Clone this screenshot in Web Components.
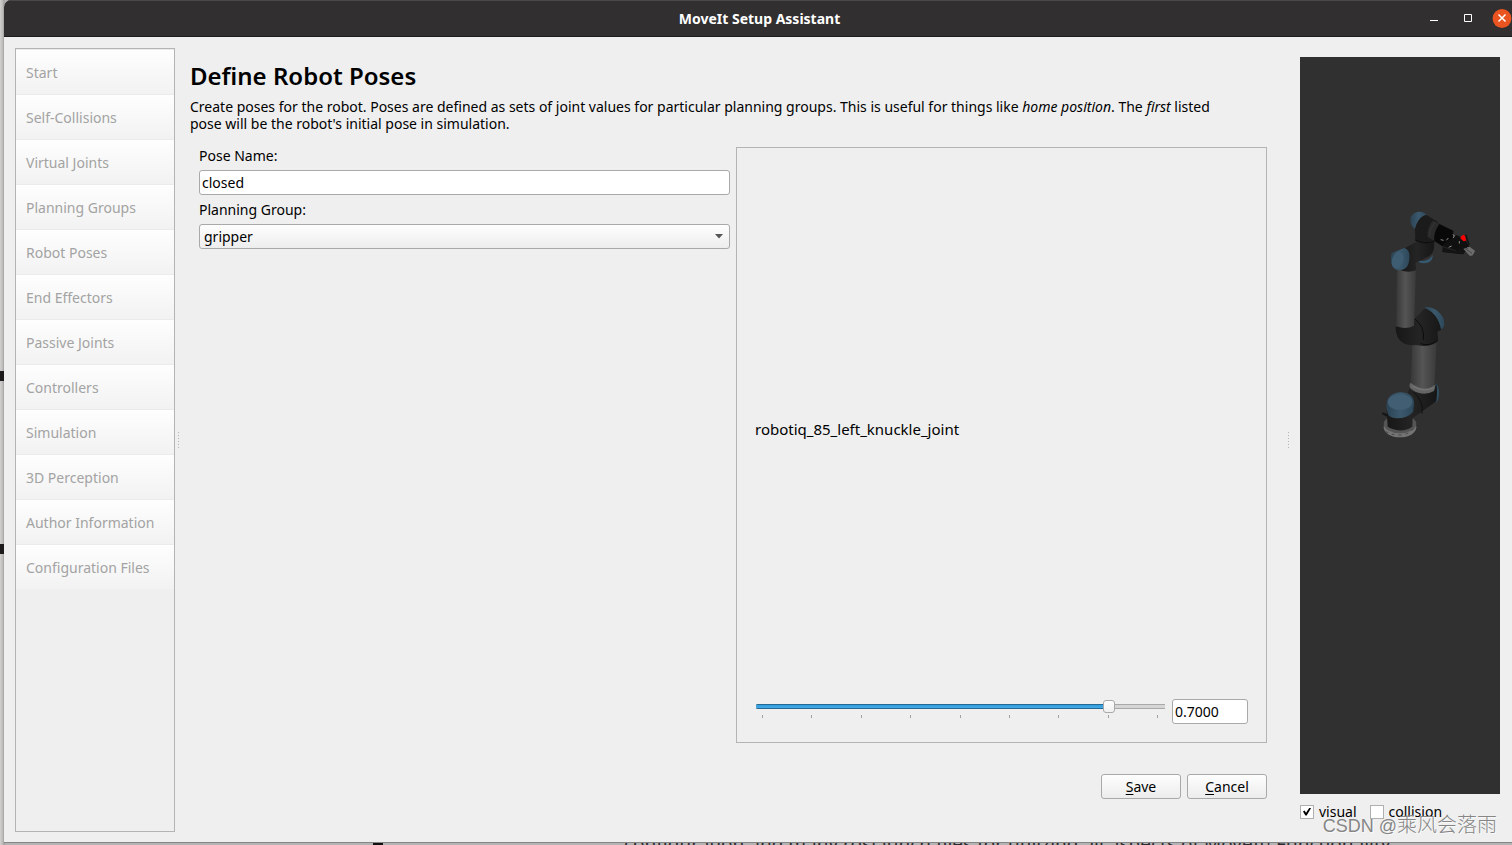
<!DOCTYPE html>
<html lang="en">
<head>
<meta charset="utf-8">
<title>MoveIt Setup Assistant</title>
<style>
  html, body { height: 100%; }
  body { margin: 0; overflow: hidden; font: 14px/17px "Noto Sans", "Open Sans", sans-serif; color: #000; }
</style>
</head>
<body>
<setup-desktop>
  <title-bar slot="title">MoveIt Setup Assistant</title-bar>
  <step-list slot="steps">
    <step-item>Start</step-item>
    <step-item>Self-Collisions</step-item>
    <step-item>Virtual Joints</step-item>
    <step-item>Planning Groups</step-item>
    <step-item>Robot Poses</step-item>
    <step-item>End Effectors</step-item>
    <step-item>Passive Joints</step-item>
    <step-item>Controllers</step-item>
    <step-item>Simulation</step-item>
    <step-item>3D Perception</step-item>
    <step-item>Author Information</step-item>
    <step-item>Configuration Files</step-item>
  </step-list>
  <pose-page slot="page">
    <span slot="heading">Define Robot Poses</span>
    <span slot="intro">Create poses for the robot. Poses are defined as sets of joint values for particular planning groups. This is useful for things like <i>home position</i>. The <i>first</i> listed pose will be the robot's initial pose in simulation.</span>
    <pose-form slot="form"></pose-form>
    <joint-control slot="joints" min="0" max="0.8" value="0.7">robotiq_85_left_knuckle_joint</joint-control>
    <push-button slot="actions"><u>S</u>ave</push-button>
    <push-button slot="actions"><u>C</u>ancel</push-button>
  </pose-page>
  <robot-view slot="view"></robot-view>
  <span slot="backdrop">configuration and many roslaunch files for utilizing all aspects of MoveIt! Functionality.</span>
</setup-desktop>

<script>
function define(name, markup, setup) {
  const template = document.createElement('template');
  template.innerHTML = markup;
  customElements.define(name, class extends HTMLElement {
    constructor() {
      super();
      this.attachShadow({ mode: 'open' }).append(template.content.cloneNode(true));
    }
    connectedCallback() { if (setup) setup(this, this.shadowRoot); }
  });
}

define('setup-desktop', `
  <style>
    :host { display: flex; flex-direction: column; height: 100vh; box-sizing: border-box; padding-left: 4px; position: relative;
      background:
        linear-gradient(#1c1a1a, #1c1a1a) 0 371px / 4px 10px no-repeat,
        linear-gradient(#1c1a1a, #1c1a1a) 0 544px / 4px 10px no-repeat,
        linear-gradient(90deg, #d2d1d0, #b9b8b7 3px, #9b9a99 4px, #b4b4b4 5px); }
    .window { flex: 1; min-height: 0; display: flex; flex-direction: column; background: #efefef;
      border-radius: 7px 0 0 0; overflow: hidden; border-bottom: 1px solid #858585; }
    .body { flex: 1; min-height: 0; display: grid; grid-template-columns: 160px 15px minmax(0, 1fr) 33px 200px; padding: 11px 12px 10px 11px; }
    .grip { align-self: center; width: 1px; height: 17px; margin-left: 3px; background: repeating-linear-gradient(#b4b4b4 0 1px, transparent 1px 3px); }
    .grip.wide { margin-left: 21px; }
    .under { height: 2px; overflow: hidden; display: flex; align-items: center; padding-left: 620px; font-size: 19px; color: #2c2a2e; white-space: nowrap;
      background: linear-gradient(#111, #111) 369px 0 / 10px 2px no-repeat; }
    .mark { position: absolute; right: 15px; bottom: 6px; font: 18px/26px "Liberation Sans", "Noto Sans CJK SC", sans-serif; color: #868686; text-shadow: 1px 1px 0 #fffa; white-space: pre; }
    .mark b { font-size: 20px; font-weight: 300; }
  </style>
  <div class="window">
    <slot name="title"></slot>
    <div class="body">
      <slot name="steps"></slot><span class="grip"></span>
      <slot name="page"></slot><span class="grip wide"></span>
      <slot name="view"></slot>
    </div>
  </div>
  <div class="under"><slot name="backdrop"></slot></div>
  <div class="mark">CSDN @<b>乘风会落雨</b></div>`);

define('title-bar', `
  <style>
    :host { display: grid; grid-template-columns: 1fr auto 1fr; align-items: center; height: 37px; box-sizing: border-box;
      background: #312f30; border-top: 1px solid #4a4849; border-bottom: 1px solid #1c1b1b; color: #fff; }
    h1 { grid-column: 2; margin: 0 0 0 3px; font-size: 14px; font-weight: 700; line-height: 17px; }
    .controls { display: flex; justify-content: flex-end; gap: 14px; }
    button { width: 20px; height: 20px; padding: 0; border: 0; background: none; }
    button svg { display: block; }
  </style>
  <h1><slot></slot></h1>
  <div class="controls">
    <button aria-label="Minimize"><svg width="20" height="20"><path d="M6 11.500h8" stroke="#fff"/></svg></button>
    <button aria-label="Maximize"><svg width="20" height="20"><path d="M6.500 5.500h7v7h-7z" fill="none" stroke="#fff"/></svg></button>
    <button aria-label="Close"><svg width="20" height="20"><circle cx="10" cy="9.500" r="9.400" fill="#e95420"/><path d="M6.500 5.500l7 7m0-7l-7 7" stroke="#fff" stroke-width="1.500"/></svg></button>
  </div>`);

define('step-list', `
  <style>
    :host { display: block; border: 1px solid #b4b4b4; box-sizing: border-box; }
    nav { display: flex; flex-direction: column; }
  </style>
  <nav><slot></slot></nav>`);

define('step-item', `
  <style>
    :host { display: block; }
    button { display: block; width: 100%; height: 45px; padding: 0 10px; border: 0; border-top: 1px solid #ebebeb;
      background: linear-gradient(#fefefe, #f2f2f2); color: #a3a3a3; font: inherit; text-align: left; white-space: nowrap; }
  </style>
  <button disabled><slot></slot></button>`);

define('pose-page', `
  <style>
    :host { display: flex; flex-direction: column; min-width: 0; padding-bottom: 33px; }
    h2 { margin: 12px 0 0; font-size: 24px; line-height: 32px; font-weight: 600; }
    p { margin: 6px 24px 0 0; }
    .columns { flex: 1; display: grid; grid-template-columns: minmax(0, 1fr) minmax(0, 1fr); gap: 6px; margin: 15px 0 0 9px; }
    .joints { display: flex; border: 1px solid #b4b4b4; padding: 18px; }
    .joints ::slotted(*) { flex: 1; }
    .actions { display: flex; justify-content: flex-end; gap: 6px; margin-top: 31px; }
  </style>
  <h2><slot name="heading"></slot></h2>
  <p><slot name="intro"></slot></p>
  <div class="columns">
    <slot name="form"></slot>
    <div class="joints"><slot name="joints"></slot></div>
  </div>
  <div class="actions"><slot name="actions"></slot></div>`);

define('pose-form', `
  <style>
    :host { display: block; }
    label { display: block; line-height: 17px; }
    input, select { box-sizing: border-box; width: 100%; height: 25px; border: 1px solid #a9a9a9; border-radius: 3px; color: #000; font: inherit; outline: 0; }
    input { display: block; margin: 6px 0; padding: 0 2px; background: #fff; }
    .combo { display: grid; align-items: center; margin-top: 6px; }
    select { appearance: none; padding: 0 24px 0 4px; line-height: 22px; background: linear-gradient(#fefefe, #ededed); grid-area: 1 / 1; }
    svg { grid-area: 1 / 1; justify-self: end; margin-right: 7px; pointer-events: none; }
  </style>
  <label for="name">Pose Name:</label>
  <input id="name" type="text" value="closed">
  <label for="group">Planning Group:</label>
  <div class="combo">
    <select id="group"><option>gripper</option></select>
    <svg width="8" height="5"><path d="M0 0h8L4 4.500z" fill="#555"/></svg>
  </div>`);

define('joint-control', `
  <style>
    :host { display: flex; flex-direction: column; gap: 6px; }
    label { flex: 1; display: flex; align-items: center; font-size: 15px; }
    .row { display: grid; grid-template-columns: minmax(0, 1fr) 76px; gap: 7px; }
    .slider { padding: 1px 1px 0; background: linear-gradient(#a9a9a9 0 1px, #d6d6d6 1px 4px, #a9a9a9 4px) 100% 5px / calc(100% - 1px) 5px no-repeat; }
    input { margin: 0; box-sizing: border-box; }
    [type=range] { appearance: none; display: block; width: 100%; height: 13px; background: none; }
    [type=range]::-webkit-slider-runnable-track { height: 5px; border-radius: 2px;
      background: linear-gradient(#236a97 0 1px, #319ddd 1px, #45aae5 4px, #236a97 4px) 0 0 / var(--fill) 100% no-repeat; }
    [type=range]::-webkit-slider-thumb { appearance: none; width: 12px; height: 13px; margin-top: -4px; border: 1px solid #a9a9a9; border-radius: 3px; background: linear-gradient(#fefefe, #f0f0f0); box-sizing: border-box; }
    .ticks { display: flex; justify-content: space-between; padding: 2px 6px 0; }
    .ticks i { width: 1px; height: 3px; background: #a0a0a0; }
    [type=text] { width: 76px; height: 25px; padding: 0 2px; border: 1px solid #a9a9a9; border-radius: 3px; background: #fff; font: inherit; color: #000; }
  </style>
  <label for="range"><slot></slot></label>
  <div class="row">
    <div class="slider">
      <input id="range" type="range" step="0.0001">
      <div class="ticks"><i></i><i></i><i></i><i></i><i></i><i></i><i></i><i></i><i></i></div>
    </div>
    <input type="text" aria-label="Joint value">
  </div>`, (host, root) => {
  const range = root.querySelector('[type=range]');
  const text = root.querySelector('[type=text]');
  range.min = host.getAttribute('min');
  range.max = host.getAttribute('max');
  range.value = host.getAttribute('value');
  const sync = () => {
    range.style.setProperty('--fill', 100 * (range.value - range.min) / (range.max - range.min) + '%');
    text.value = Number(range.value).toFixed(4);
  };
  range.addEventListener('input', sync);
  text.addEventListener('change', () => { range.value = text.value; sync(); });
  sync();
});

define('push-button', `
  <style>
    :host { display: block; }
    button { width: 80px; height: 25px; padding: 0; border: 1px solid #a9a9a9; border-radius: 3px; background: linear-gradient(#fefefe, #ececec); color: #000; font: inherit; text-underline-offset: 2px; }
  </style>
  <button type="button"><slot></slot></button>`);

define('robot-view', `
  <style>
    :host { display: flex; flex-direction: column; padding-top: 9px; }
    .scene { flex: 1; min-height: 0; background: #303030; }
    .scene svg { display: block; width: 100%; height: 100%; }
    .toggles { display: flex; gap: 13px; padding: 9px 0 12px; }
    label { display: flex; align-items: center; gap: 5px; }
    input { appearance: none; box-sizing: border-box; width: 14px; height: 14px; margin: 0; border: 1px solid #b0b0b0; background: #fff; display: grid; place-items: center; }
    input:checked::after { content: ""; width: 8px; height: 8px; background: #000; clip-path: polygon(0 50%, 18% 38%, 38% 65%, 82% 0, 100% 10%, 46% 100%, 30% 100%); }
  </style>
  <div class="scene">
    <svg viewBox="0 0 200 737" role="img" aria-label="Robot arm model">
      <defs>
        <linearGradient id="tube"><stop offset="0" stop-color="#383838"/><stop offset=".45" stop-color="#555"/><stop offset="1" stop-color="#3a3a3a"/></linearGradient>
        <linearGradient id="dark"><stop offset="0" stop-color="#171717"/><stop offset=".5" stop-color="#242424"/><stop offset="1" stop-color="#161616"/></linearGradient>
        <linearGradient id="blue"><stop offset="0" stop-color="#2b4353"/><stop offset=".5" stop-color="#3b586d"/><stop offset="1" stop-color="#2d485a"/></linearGradient>
      </defs>
      <g transform="translate(70 143) scale(.33333)">
        <ellipse cx="90" cy="682" rx="49" ry="30" fill="#747474"/>
        <ellipse cx="90" cy="672" rx="49" ry="28" fill="#555"/>
        <path d="M47 694l8 5m10 4h8m12 2h10m12-3l8-3m10-7l5-5" stroke="#4a4a4a" stroke-width="3"/>
        <path d="M38 637l18 7-2 8-18-9z" fill="#151515"/>
        <path d="M200 551q9 16 6 39-2 15-10 18l-8-46z" fill="#315064"/>
        <path d="M117 568l13-8 60 14 9-22q4 22 0 52l-61 43-10 8-1 25q-33 23-74 0l-3-50 60-42z" fill="url(#dark)"/>
        <path d="M130 576q32 27 26 65" fill="none" stroke="#101010" stroke-width="3"/>
        <path d="M49 620q2-44 46-43 38 3 37 35l-3 24q-18 20-50 19-25-2-27-18z" fill="url(#blue)"/>
        <ellipse cx="90" cy="606" rx="37" ry="24" fill="#415e72"/>
        <path d="M127 415h73l-7 151q-34 23-71-5z" fill="url(#tube)"/>
        <path d="M121 548q-7 13 6 22 34 21 65 3 5-7 2-19-28 25-73-6z" fill="#646464"/>
        <path d="M127 558q34 21 64 5" fill="none" stroke="#858585" stroke-width="2"/>
        <path d="M77 380l56-22 32-33q42-8 55 52-4 13-18 18l3 28q-26 22-66 12-58 5-62-49z" fill="url(#dark)"/>
        <path d="M134 356q32 26 26 64M151 431q28 9 49-8" fill="none" stroke="#0d0d0d" stroke-width="3"/>
        <path d="M162 323q13-7 37 7 25 18 24 43-1 11-10 15-9-49-51-65z" fill="url(#blue)"/>
        <path d="M81 205h57l-6 172q-24 13-53 2z" fill="url(#tube)"/>
        <path d="M144 180q26 10 45-15-2 24-26 25-10 0-19-5z" fill="#365970"/>
        <path d="M107 143l31-17 54 1q4 33-20 44l-35 18 1 22q-23 9-48-1z" fill="url(#dark)"/>
        <path d="M65 159l38-15q18 4 15 34-2 24-17 30-23 9-34-10-8-17-2-39z" fill="url(#blue)"/>
        <ellipse cx="83" cy="181" rx="17" ry="26" fill="#3f5d72" transform="rotate(17 83 181)"/>
        <path d="M121 63q-2-19 20-27 17-4 30 8-28 10-34 42-13-2-16-23z" fill="url(#blue)"/>
        <path d="M168 44l36 22-10 62q-20 8-38 1l-20-6-1-36q7-34 33-43z" fill="#1b1b1b"/>
        <path d="M136 120q27 14 56 4" fill="none" stroke="#0d0d0d" stroke-width="3"/>
        <path d="M188 62l24 9-17 52-22-11q-3-30 15-50z" fill="#2a2a2a"/>
        <path d="M194 68q-16 20-16 42" fill="none" stroke="#363636" stroke-width="3"/>
        <path d="M208 72l42 20-2 28-31 19-24-16q-4-23 15-51z" fill="#080808"/>
        <path d="M219 133l40-28 28 14 13 25-25 19-57-7z" fill="#101010"/>
        <path d="M248 104l5 3-3 7m18 9v8m-56-12l9 2m8 0l6-7m1 28l9-4" fill="none" stroke="#8a8a8a" stroke-width="3"/>
        <path d="M272 110l8-6 6 4 2 14-7 2-9-8z" fill="#f00"/>
        <path d="M287 104l5 15 6 16" stroke="#111" stroke-width="4"/>
        <path d="M280 147l8-4 20 14 1 9-9 2zM290 142l9-2 16 12-4 10-8-2z" fill="#6c6c6c"/>
        <path d="M284 145l22 15" stroke="#333" stroke-width="2"/>
        <path d="M218 140l39 12 12-5 14 8-1 8-30-4-35-3z" fill="#141414"/>
        <path d="M218 140l39 12" stroke="#303030" stroke-width="2"/>
      </g>
    </svg>
  </div>
  <div class="toggles">
    <label><input type="checkbox" checked>visual</label>
    <label><input type="checkbox">collision</label>
  </div>`);
</script>
</body>
</html>
